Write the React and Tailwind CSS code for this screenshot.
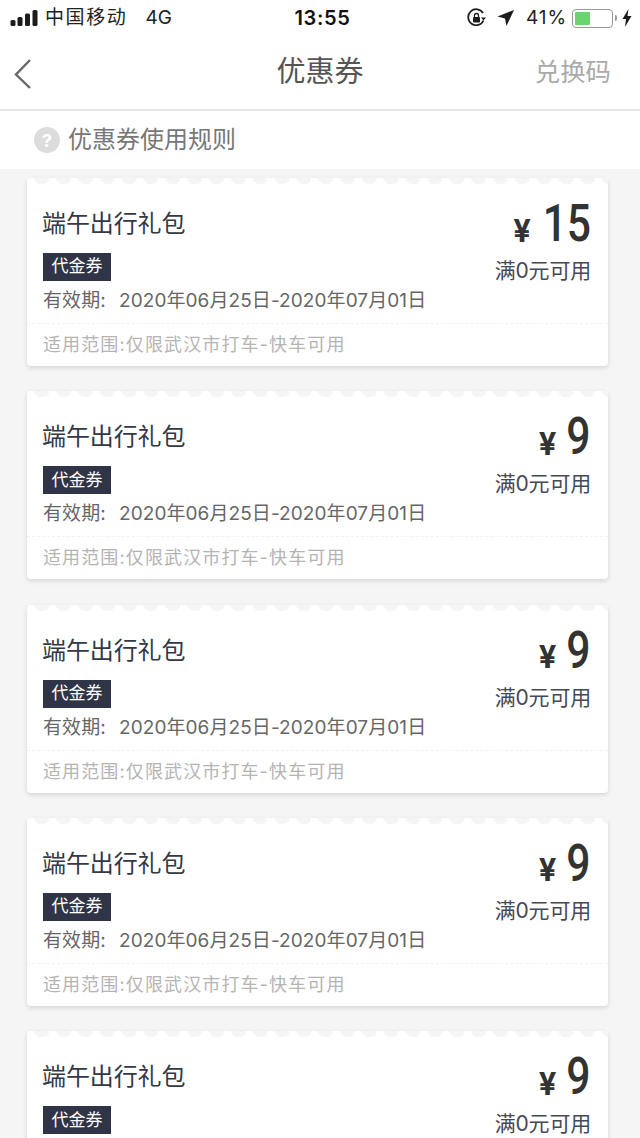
const CJK = '"Inter","Noto Sans CJK SC",sans-serif';

function Coupon({ amount, gapClass }) {
  return (
    <div className="relative h-[188px] shrink-0 rounded-[4px] bg-white shadow-[0_2px_5px_rgba(0,0,0,0.13)]">
      <div className="absolute left-0 right-0 top-0 h-[8px] bg-[radial-gradient(circle_at_15px_-2px,#f5f5f5_8px,transparent_8.6px)] bg-[length:21.85px_8px]" />
      <div className="flex h-[145px] justify-between pl-4 pr-[17px]">
        <div className="flex flex-col items-start">
          <div className="ml-[-1px] mt-[28px] text-[24px] leading-[36px] tracking-[-0.1px] text-[#333844]">端午出行礼包</div>
          <div className="mt-[11px] flex h-[28px] w-[68px] items-center justify-center bg-[#2f3447] text-[17px] text-white">代金券</div>
          <div className="mt-[6px] flex text-[19px] leading-[28px] tracking-[0.08px] text-[#666]">
            <span className="w-[76px]">有效期:</span>
            <span>2020年06月25日-2020年07月01日</span>
          </div>
        </div>
        <div className="flex flex-col items-end">
          <div className="mt-[16px] flex h-[60px] items-center">
            <span className="mt-[12px] text-[31px] font-bold leading-none text-[#333]">¥</span>
            <span className={`${gapClass} origin-right scale-x-[0.82] font-['Roboto'] text-[52px] font-medium leading-none text-[#333]`}>{amount}</span>
          </div>
          <div className="mt-[2px] text-[21px] leading-[30px] tracking-[-0.2px] text-[#444a55]">满0元可用</div>
        </div>
      </div>
      <div className="border-t border-dashed border-[#f2f2f2] pl-4 pt-[7px] text-[18px] leading-[28px] tracking-[1.12px] text-[#b4b4b4]">适用范围:仅限武汉市打车-快车可用</div>
    </div>
  );
}

export default function App() {
  return (
    <div className="flex h-[1138px] w-[640px] flex-col overflow-hidden bg-[#f5f5f5]" style={{ fontFamily: CJK }}>
      <div className="shrink-0 bg-white">
        {/* status bar */}
        <div className="flex h-[36px] items-center justify-between pl-[10px] pr-[8px] text-[19px] text-[#222]">
          <div className="flex w-[200px] items-center">
            <svg width="29" height="18" viewBox="0 0 29 18" fill="#1c1c1c">
              <rect x="0.5" y="11" width="5" height="6" rx="1.5" />
              <rect x="7.5" y="8" width="5" height="9" rx="1.5" />
              <rect x="15" y="4.5" width="5" height="12.5" rx="1.5" />
              <rect x="22.5" y="1" width="5" height="16" rx="1.5" />
            </svg>
            <span className="ml-[6px] tracking-[1.6px]">中国移动</span>
            <span className="ml-[18px]">4G</span>
          </div>
          <div className="ml-[3px] text-[20px] font-semibold tracking-[0.7px] text-[#111]">13:55</div>
          <div className="flex w-[200px] items-center justify-end">
            <svg width="20" height="20" viewBox="0 0 20 20" fill="none" stroke="#1c1c1c" strokeWidth="1.7">
              <path d="M16.5 12.5A8 8 0 1 1 16 5" />
              <path d="M14 9.5h5l-2.5 3z" fill="#1c1c1c" stroke="none" />
              <rect x="6" y="9" width="7" height="5.5" rx="1" fill="#1c1c1c" stroke="none" />
              <path d="M7.5 9V7.5a2 2 0 0 1 4 0V9" strokeWidth="1.3" />
            </svg>
            <svg className="ml-[10px]" width="18" height="18" viewBox="0 0 18 18" fill="#1c1c1c">
              <path d="M17 1 9.5 17 8 9.5 0.5 7.5z" />
            </svg>
            <span className="ml-[11px] text-[19px] tracking-[0.9px]">41%</span>
            <div className="ml-[5px] flex h-[19px] w-[41px] items-center rounded-[4px] border border-[#999] p-[2px]">
              <div className="h-full w-[15px] rounded-[1px] bg-[#6dd36f]" />
            </div>
            <div className="ml-[2px] h-[6px] w-[2px] rounded-r-[2px] bg-[#999]" />
            <svg className="ml-[5px]" width="10" height="18" viewBox="0 0 10 18" fill="#1c1c1c">
              <path d="M6.5 0 0.5 10h3.5L3 18l6.5-11H5.5z" />
            </svg>
          </div>
        </div>
        {/* nav */}
        <div className="grid h-[75px] grid-cols-3 items-center border-b-2 border-[#e6e6e6] pl-[13px] pr-[29px]">
          <svg className="mt-[2px]" width="19" height="32" viewBox="0 0 19 32" fill="none" stroke="#666" strokeWidth="2.4">
            <path d="M17 2 3 16.5 17 30" />
          </svg>
          <div className="ml-[8px] mr-[-8px] mt-[-2px] whitespace-nowrap text-center text-[29px] text-[#555]">优惠券</div>
          <div className="text-right text-[25.4px] text-[#aaa]">兑换码</div>
        </div>
        {/* rules */}
        <div className="flex h-[58px] items-center pl-[34px]">
          <div className="flex h-[26px] w-[26px] items-center justify-center rounded-full bg-[#dcdcdc] text-[18px] font-bold text-white">?</div>
          <span className="ml-[8px] mt-[-1px] text-[24px] text-[#777]">优惠券使用规则</span>
        </div>
      </div>
      {/* list */}
      <div className="flex flex-col gap-[25.33px] pl-[27px] pr-[32px] pt-[9px]">
        <Coupon amount="15" gapClass="ml-[1px]" />
        <Coupon amount="9" gapClass="ml-[5px]" />
        <Coupon amount="9" gapClass="ml-[5px]" />
        <Coupon amount="9" gapClass="ml-[5px]" />
        <Coupon amount="9" gapClass="ml-[5px]" />
      </div>
    </div>
  );
}
